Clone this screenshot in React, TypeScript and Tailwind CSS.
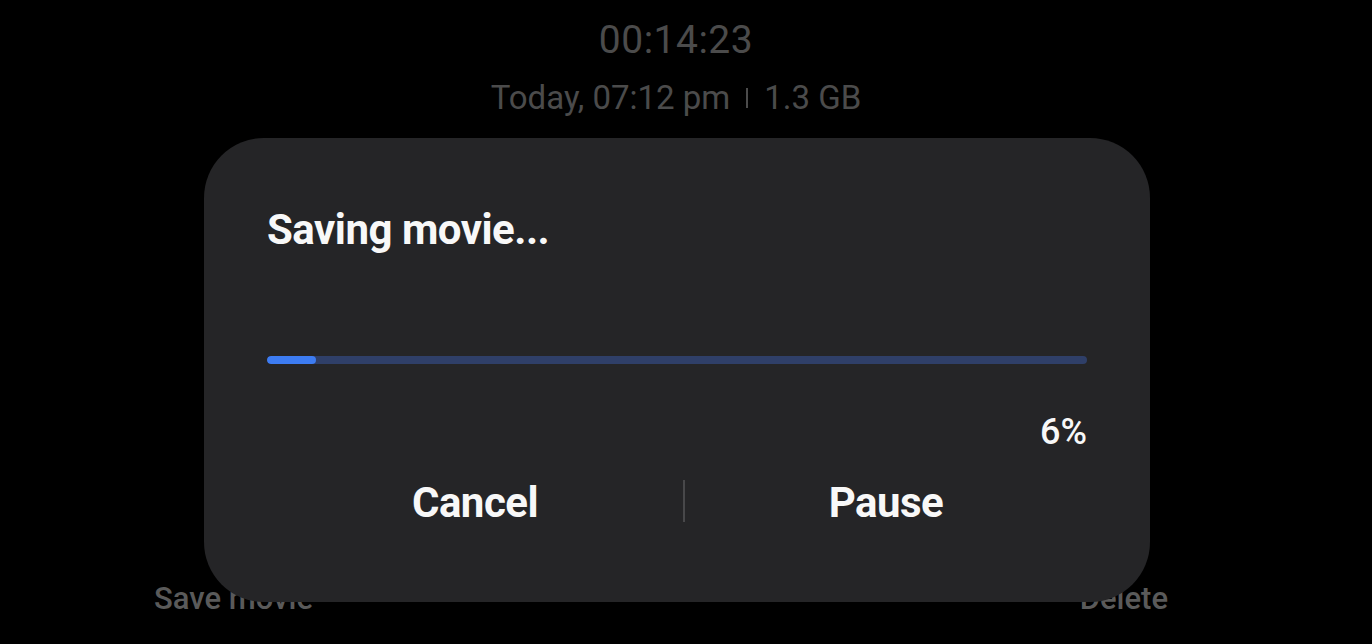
export default function App() {
  const progress = 6;
  return (
    <div className="relative w-full h-[644px] bg-black overflow-hidden font-['Roboto',sans-serif]">
      <div className="flex flex-col items-center pt-[14px] pr-[20px]">
        <div className="text-[39px] leading-[52px] text-[#4b4b4b] tracking-[0.5px]">00:14:23</div>
        <div className="flex items-center mt-[10px] text-[33px] leading-[44px] text-[#4b4b4b]">
          <span>Today, 07:12 pm</span>
          <span className="mx-[16px] w-[2px] h-[20px] bg-[#4b4b4b]" />
          <span>1.3 GB</span>
        </div>
      </div>
      <div className="flex justify-between px-[154px] pt-[459px] text-[31px] leading-[40px] text-[#5a5a5a] font-medium">
        <span>Save movie</span>
        <span className="pr-[50px]">Delete</span>
      </div>

      <div className="absolute left-[204px] top-[138px] w-[946px] h-[464px] rounded-[60px] bg-[#252527] pl-[63px] pr-[63px] pt-[64px] flex flex-col">
        <div className="text-[42px] leading-[56px] font-bold text-[#f8f8f8] tracking-[-0.5px]">Saving movie...</div>
        <div className="mt-[98px] h-[8px] w-full rounded-full bg-[#2f3f68] overflow-hidden">
          <div className="h-full rounded-full bg-[#3d7cf2]" style={{ width: `${progress}%` }} />
        </div>
        <div className="mt-[46px] text-right text-[36px] leading-[44px] font-medium text-[#f8f8f8]">{progress}%</div>
        <div className="mt-[21px] flex items-center">
          <div className="w-[416px] shrink-0 text-center text-[42px] leading-[56px] font-bold text-[#f8f8f8] tracking-[-0.5px]">Cancel</div>
          <div className="w-[2px] h-[42px] -mt-[4px] shrink-0 bg-[#48484a]" />
          <div className="flex-1 text-center text-[42px] leading-[56px] font-bold text-[#f8f8f8] tracking-[-0.5px]">Pause</div>
        </div>
      </div>
    </div>
  );
}
